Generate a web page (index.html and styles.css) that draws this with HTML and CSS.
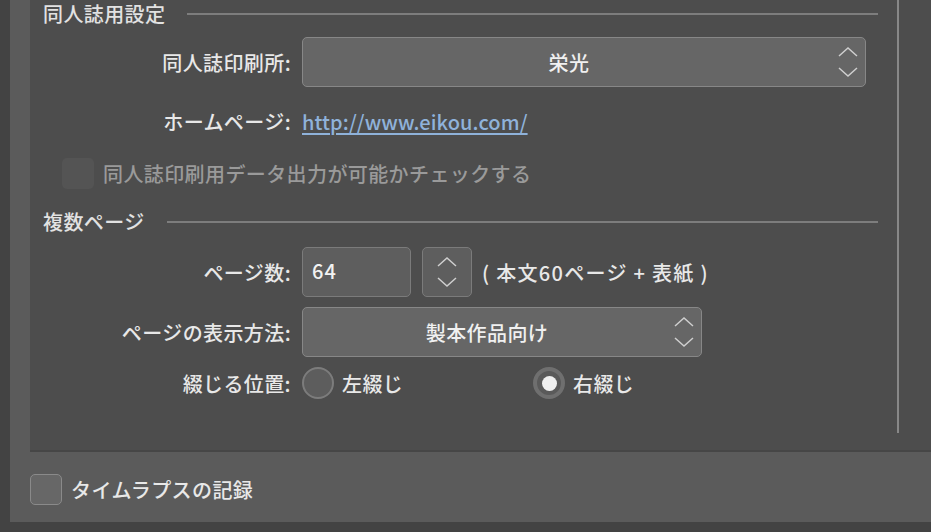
FILE: index.html
```html
<!DOCTYPE html>
<html lang="ja">
<head>
    <meta charset="UTF-8">
    <meta name="viewport" content="width=device-width, initial-scale=1.0">
    <title>同人誌用設定</title>
    <link rel="stylesheet" href="styles.css">
</head>
<body>
    <div class="window">
        <div class="settings">
            <div class="scroll">
                <!-- 同人誌用設定 -->
                <div class="group-title">
                    <span>同人誌用設定</span>
                    <span class="rule"></span>
                </div>

                <div class="field field-printer">
                    <span class="field-label">同人誌印刷所:</span>
                    <div class="select select-wide">
                        <span class="select-value">栄光</span>
                        <svg class="chevrons" width="20" height="32" viewBox="0 0 20 32">
                            <polyline points="1,10 10,2 19,10" />
                            <polyline points="1,22 10,30 19,22" />
                        </svg>
                    </div>
                </div>

                <div class="field field-home">
                    <span class="field-label">ホームページ:</span>
                    <a class="link" href="#">http://www.eikou.com/</a>
                </div>

                <div class="check-row check-disabled">
                    <span class="checkbox"></span>
                    <span>同人誌印刷用データ出力が可能かチェックする</span>
                </div>

                <!-- 複数ページ -->
                <div class="group-title group-pages">
                    <span>複数ページ</span>
                    <span class="rule"></span>
                </div>

                <div class="field field-count">
                    <span class="field-label">ページ数:</span>
                    <div class="number-input">64</div>
                    <div class="stepper">
                        <svg class="chevrons" width="20" height="32" viewBox="0 0 20 32">
                            <polyline points="1,10 10,2 19,10" />
                            <polyline points="1,22 10,30 19,22" />
                        </svg>
                    </div>
                    <span class="note">( 本文60ページ + 表紙 )</span>
                </div>

                <div class="field field-view">
                    <span class="field-label">ページの表示方法:</span>
                    <div class="select select-mid">
                        <span class="select-value">製本作品向け</span>
                        <svg class="chevrons" width="20" height="32" viewBox="0 0 20 32">
                            <polyline points="1,10 10,2 19,10" />
                            <polyline points="1,22 10,30 19,22" />
                        </svg>
                    </div>
                </div>

                <div class="field field-bind">
                    <span class="field-label">綴じる位置:</span>
                    <label class="radio-option">
                        <span class="radio"></span>
                        <span>左綴じ</span>
                    </label>
                    <label class="radio-option">
                        <span class="radio radio-on"></span>
                        <span>右綴じ</span>
                    </label>
                </div>
            </div>
        </div>

        <div class="footer">
            <div class="check-row">
                <span class="checkbox checkbox-on"></span>
                <span>タイムラプスの記録</span>
            </div>
        </div>
    </div>
</body>
</html>
```

FILE: styles.css
```css
html, body {
    margin: 0;
    padding: 0;
    height: 100%;
    overflow: hidden;
}

body {
    background-color: #434343;
    font-family: "Noto Sans CJK JP", "Noto Sans", sans-serif;
    font-size: 20px;
    font-weight: 500;
    letter-spacing: 0.4px;
    color: #e8e8e8;
}

.window {
    margin-left: 10px;
    height: 522px;
    background-color: #5b5b5b;
    padding-left: 20px;
    display: flex;
    flex-direction: column;
}

.settings {
    height: 450px;
    background-color: #4d4d4d;
    border-bottom: 2px solid #464646;
}

.scroll {
    width: 835px;
    height: 433px;
    padding-left: 13px;
    padding-right: 19px;
    border-right: 2px solid #888888;
    box-sizing: content-box;
    display: flex;
    flex-direction: column;
}

/* 그룹 제목 */
.group-title {
    display: flex;
    align-items: center;
    height: 28px;
    line-height: 28px;
    color: #e2e2e2;
}

.group-title .rule {
    flex: 1;
    height: 2px;
    background-color: #7d7d7d;
    margin-left: 22px;
}

.group-pages {
    margin-top: 18px;
}

.field {
    display: flex;
    align-items: center;
}

.field-label {
    width: 248px;
    margin-right: 11px;
    text-align: right;
    flex-shrink: 0;
}

.field-printer {
    margin-top: 9px;
}

.field-home {
    margin-top: 17px;
    height: 34px;
}

.field-count {
    margin-top: 11px;
}

.field-view {
    margin-top: 10px;
}

.field-bind {
    margin-top: 10px;
    height: 32px;
}

/* 셀렉트 */
.select {
    height: 50px;
    box-sizing: border-box;
    background-color: #666666;
    border: 1px solid #878787;
    border-radius: 5px;
    position: relative;
    display: flex;
    align-items: center;
    justify-content: center;
    padding-right: 30px;
}

.select-wide {
    width: 564px;
}

.select-mid {
    width: 400px;
}

.select-value {
    color: #f0f0f0;
}

.chevrons {
    fill: none;
    stroke: #cfcfcf;
    stroke-width: 1.5;
}

.select .chevrons {
    position: absolute;
    right: 7px;
    top: 8px;
}

.link {
    color: #8fb2da;
    text-decoration: underline;
    text-underline-offset: 3px;
    letter-spacing: 0.1px;
}

/* 체크박스 */
.check-row {
    display: flex;
    align-items: center;
    height: 34px;
}

.check-disabled {
    margin-top: 18px;
    padding-left: 19px;
    color: #9a9a9a;
}

.checkbox {
    width: 32px;
    height: 31px;
    box-sizing: border-box;
    border-radius: 5px;
    margin-right: 9px;
    background-color: #545454;
}

.checkbox-on {
    background-color: #676767;
    border: 1px solid #8a8a8a;
}

/* 숫자 입력 */
.number-input {
    width: 109px;
    height: 50px;
    box-sizing: border-box;
    background-color: #5e5e5e;
    border: 1px solid #7b7b7b;
    border-radius: 5px;
    padding-left: 9px;
    line-height: 46px;
    color: #f2f2f2;
    letter-spacing: 1px;
}

.stepper {
    width: 50px;
    height: 50px;
    box-sizing: border-box;
    margin-left: 11px;
    background-color: #5e5e5e;
    border: 1px solid #7b7b7b;
    border-radius: 5px;
    display: flex;
    align-items: center;
    justify-content: center;
}

.note {
    margin-left: 10px;
    letter-spacing: 1.3px;
}

/* 라디오 */
.radio-option {
    display: flex;
    align-items: center;
    width: 231px;
}

.radio {
    width: 32px;
    height: 32px;
    box-sizing: border-box;
    border-radius: 50%;
    border: 2px solid #7c7c7c;
    background-color: #5d5d5d;
    margin-right: 8px;
    display: flex;
    align-items: center;
    justify-content: center;
}

.radio-on {
    border: 4px solid #6f6f6f;
    background-color: #5a5a5a;
}

.radio-on::after {
    content: "";
    width: 15px;
    height: 15px;
    border-radius: 50%;
    background-color: #f0f0f0;
}

.footer {
    padding-top: 21px;
}

.footer .check-row {
    height: 32px;
}
```
